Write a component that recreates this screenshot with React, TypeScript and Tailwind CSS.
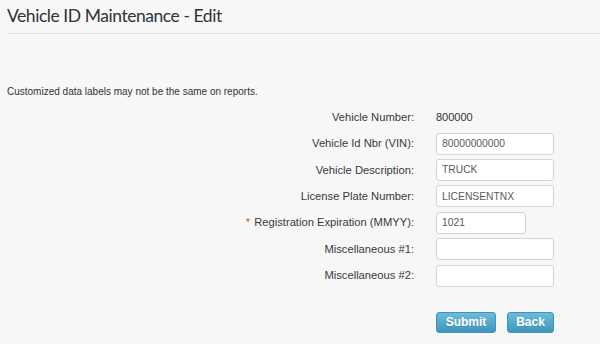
const fields = [
  { label: "Vehicle Id Nbr (VIN):", value: "80000000000", width: "w-[118px]" },
  { label: "Vehicle Description:", value: "TRUCK", width: "w-[118px]" },
  { label: "License Plate Number:", value: "LICENSENTNX", width: "w-[118px]" },
  { label: "Registration Expiration (MMYY):", value: "1021", width: "w-[90px]", required: true },
  { label: "Miscellaneous #1:", value: "", width: "w-[118px]" },
  { label: "Miscellaneous #2:", value: "", width: "w-[118px]" },
];

function Row({ label, required, children }: { label: string; required?: boolean; children: React.ReactNode }) {
  return (
    <div className="flex h-[26.4px] items-center">
      <div className="w-[407px] text-right text-[11.2px] text-[#3a3a3a]">
        {required && <span className="mr-[4px] text-[#d9534f]">*</span>}
        {label}
      </div>
      <div className="ml-[22px] flex items-center">{children}</div>
    </div>
  );
}

export default function App() {
  return (
    <div className="min-h-[344px] w-[600px] bg-[#f7f7f7] pl-[7px] font-['Liberation_Sans',Arial,sans-serif]">
      <div className="flex h-[34px] items-center border-b border-[#dedede] pb-[2px]">
        <h1 className="font-['Lato',sans-serif] text-[17.5px] leading-[24px] tracking-[-0.45px] text-[#2f3338]">
          Vehicle ID Maintenance - Edit
        </h1>
      </div>

      <p className="mt-[52px] text-[10px] leading-[12px] text-[#333]">
        Customized data labels may not be the same on reports.
      </p>

      <div className="mt-[6px]">
        <Row label="Vehicle Number:">
          <span className="text-[11px] text-[#333]">800000</span>
        </Row>
        {fields.map((f) => (
          <Row key={f.label} label={f.label} required={f.required}>
            <input
              defaultValue={f.value}
              className={`h-[22px] ${f.width} rounded-[3px] border border-[#d4d4d4] bg-white px-[5px] text-[10.3px] text-[#5a5a5a] outline-none`}
            />
          </Row>
        ))}
      </div>

      <div className="ml-[429px] mt-[23px] flex gap-[11px]">
        <button className="h-[21px] w-[60px] rounded-[3px] border border-[#3e93b6] bg-gradient-to-b from-[#6cbcd9] to-[#3f96bb] text-[12px] font-bold text-white [text-shadow:0_1px_0_rgba(0,0,0,0.15)]">
          Submit
        </button>
        <button className="h-[21px] w-[47px] rounded-[3px] border border-[#3e93b6] bg-gradient-to-b from-[#6cbcd9] to-[#3f96bb] text-[12px] font-bold text-white [text-shadow:0_1px_0_rgba(0,0,0,0.15)]">
          Back
        </button>
      </div>
    </div>
  );
}
